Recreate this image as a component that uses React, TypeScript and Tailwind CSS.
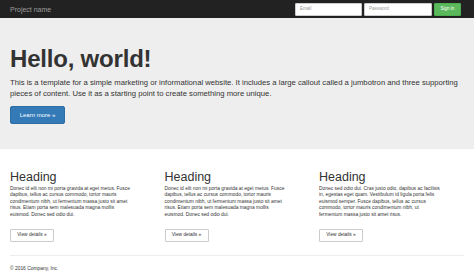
export default function App() {
  const cols = [
    [
      'Donec id elit non mi porta gravida at eget metus. Fusce',
      'dapibus, tellus ac cursus commodo, tortor mauris',
      'condimentum nibh, ut fermentum massa justo sit amet',
      'risus. Etiam porta sem malesuada magna mollis',
      'euismod. Donec sed odio dui.',
    ],
    [
      'Donec id elit non mi porta gravida at eget metus. Fusce',
      'dapibus, tellus ac cursus commodo, tortor mauris',
      'condimentum nibh, ut fermentum massa justo sit amet',
      'risus. Etiam porta sem malesuada magna mollis',
      'euismod. Donec sed odio dui.',
    ],
    [
      'Donec sed odio dui. Cras justo odio, dapibus ac facilisis',
      'in, egestas eget quam. Vestibulum id ligula porta felis',
      'euismod semper. Fusce dapibus, tellus ac cursus',
      'commodo, tortor mauris condimentum nibh, ut',
      'fermentum massa justo sit amet risus.',
    ],
  ]

  return (
    <div className="w-[474px] h-[274px] overflow-hidden bg-white text-[#333] font-['Liberation_Sans',Arial,sans-serif]">
      {/* Navbar */}
      <nav className="h-[18px] bg-[#222] flex items-center justify-between pl-[10px] pr-[13px]">
        <span className="text-[7px] text-[#9d9d9d] leading-none">Project name</span>
        <form className="flex items-center gap-[2px]">
          <div className="w-[67px] h-[13px] bg-white rounded-[1px] border border-[#ccc] flex items-center px-[4px]">
            <span className="text-[4.5px] text-[#999] leading-none">Email</span>
          </div>
          <div className="w-[68px] h-[13px] bg-white rounded-[1px] border border-[#ccc] flex items-center px-[4px]">
            <span className="text-[4.5px] text-[#999] leading-none">Password</span>
          </div>
          <button className="w-[27px] h-[13px] bg-[#5cb85c] border border-[#4cae4c] rounded-[1px] text-white text-[4.5px] leading-none">
            Sign in
          </button>
        </form>
      </nav>

      {/* Jumbotron */}
      <section className="bg-[#eee] px-[10px] pt-[28px] pb-[25px]">
        <h1 className="text-[24px] leading-[26px] font-bold text-[#333] tracking-[-0.2px]">Hello, world!</h1>
        <p className="mt-[5px] text-[7.7px] leading-[11px] text-[#333] whitespace-nowrap">
          This is a template for a simple marketing or informational website. It includes a large callout called a jumbotron and three supporting
          <br />
          pieces of content. Use it as a starting point to create something more unique.
        </p>
        <button className="mt-[7px] w-[55px] h-[18px] bg-[#337ab7] border border-[#2e6da4] rounded-[2px] text-white text-[6px] leading-none">
          Learn more &raquo;
        </button>
      </section>

      {/* Columns */}
      <div className="px-[10px] pt-[21px]">
        <div className="grid grid-cols-[142px_142px_142px] gap-x-[12.5px]">
          {cols.map((lines, i) => (
            <div key={i}>
              <h2 className="text-[12.5px] leading-[14px] text-[#333]">Heading</h2>
              <p className="mt-[1.5px] text-[4.9px] leading-[6.5px] text-[#333] whitespace-nowrap">
                {lines.map((l, j) => (
                  <span key={j}>
                    {l}
                    {j < lines.length - 1 && <br />}
                  </span>
                ))}
              </p>
              <button className="mt-[11px] w-[44px] h-[13px] bg-white border border-[#ccc] rounded-[1px] text-[4.8px] leading-none text-[#333]">
                View details &raquo;
              </button>
            </div>
          ))}
        </div>
        <hr className="mt-[12px] border-t border-[#eee]" />
        <footer className="pt-[10px] text-[4.9px] leading-[6px] text-[#333]">&copy; 2016 Company, Inc.</footer>
      </div>
    </div>
  )
}
